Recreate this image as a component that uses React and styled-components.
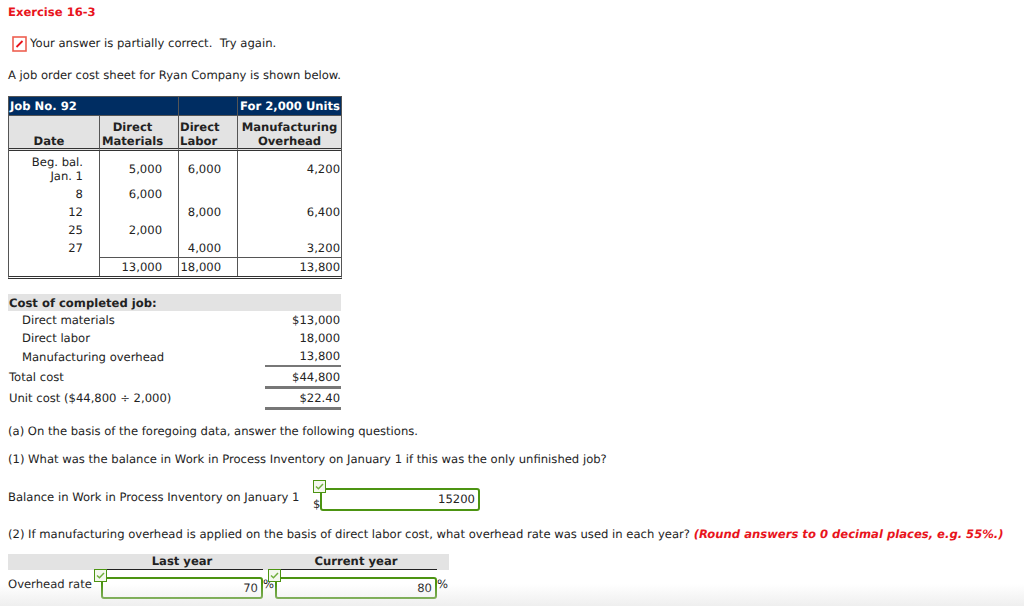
import React from 'react';
import styled, { createGlobalStyle } from 'styled-components';

const navy = '#002d62';
const gray = '#e3e3e3';
const rule = '#555';
const green = '#4c9412';

const GlobalStyle = createGlobalStyle`
    html, body {
        margin: 0;
        padding: 0;
        background: #fff;
    }
    body {
        font-family: 'DejaVu Sans', Verdana, sans-serif;
        font-size: 11.6px;
        color: #222;
        text-rendering: geometricPrecision;
    }
`;

const Page = styled.div`
    position: relative;
    width: 1024px;
    height: 606px;
    overflow: hidden;
    padding-left: 8px;
    box-sizing: border-box;
`;

const Heading = styled.div`
    color: #e8141c;
    font-weight: 700;
    line-height: 14px;
    padding-top: 5px;
`;

const Feedback = styled.div`
    display: flex;
    align-items: center;
    gap: 3px;
    margin: 17px 0 0 4px;
    height: 15px;
    line-height: 15px;
`;

const Text = styled.div`
    line-height: 14px;
    margin-top: ${props => props.$top}px;
    white-space: nowrap;
`;

const Hint = styled.em`
    color: #e8141c;
    font-weight: 700;
`;

const SheetTable = styled.table`
    border-collapse: separate;
    border-spacing: 0;
    table-layout: fixed;
    width: 334px;
    margin-top: ${props => props.$top}px;
    border: 1px solid ${rule};
    border-bottom: 3px double #333;
`;

const BannerCell = styled.th`
    background: ${navy};
    color: #fff;
    height: 18px;
    padding: 0 1px;
    text-align: ${props => props.$align || 'left'};
    border-right: ${props => props.$last ? 0 : `1px solid ${rule}`};
    border-bottom: 1px solid ${rule};
    line-height: 14px;
    white-space: nowrap;
`;

const HeadCell = styled.th`
    background: ${gray};
    height: 32px;
    padding: 0 ${props => props.$right || 1}px 0 1px;
    vertical-align: bottom;
    text-align: ${props => props.$align || 'center'};
    line-height: 14px;
    border-right: ${props => props.$last ? 0 : `1px solid ${rule}`};
    border-bottom: 3px double #333;
    color: #222;
`;

const NumCell = styled.td`
    padding: ${props => props.$nudge || 0}px ${props => props.$pad || 1}px 0 0;
    height: ${props => props.$height || 18}px;
    text-align: right;
    line-height: 14px;
    border-right: ${props => props.$last ? 0 : `1px solid ${rule}`};
    border-top: ${props => props.$total ? `1px solid ${rule}` : 0};
`;

const DateCell = styled(NumCell)`
    padding-right: 16px;
`;

const CostTable = styled.table`
    border-collapse: collapse;
    table-layout: fixed;
    width: 333px;
    margin-top: 15px;
`;

const CostHead = styled.th`
    background: ${gray};
    height: 17px;
    padding: 0 0 0 1px;
    text-align: left;
    line-height: 14px;
`;

const CostLabel = styled.td`
    height: ${props => props.$height || 18}px;
    padding: 0 0 0 ${props => props.$indent ? 14 : 1}px;
    line-height: 14px;
    white-space: nowrap;
`;

const CostValue = styled.td`
    height: ${props => props.$height || 18}px;
    padding: 0 1px 0 0;
    text-align: right;
    line-height: 14px;
    border-bottom: ${props => props.$rule || 0};
`;

const BalanceRow = styled.div`
    display: flex;
    margin-top: 15px;
    height: 37px;
`;

const BalanceLabel = styled.div`
    width: 305px;
    line-height: 14px;
    padding-top: 9px;
`;

const Dollar = styled.div`
    width: 7px;
    margin-top: 16px;
    line-height: 14px;
`;

const Field = styled.div`
    position: relative;
    box-sizing: border-box;
    width: ${props => props.$width}px;
    height: ${props => props.$height}px;
    margin-top: ${props => props.$top}px;
    border: 2px solid ${green};
    border-radius: 3px;
    background: #fff;
    text-align: right;
    padding-right: 3px;
    line-height: ${props => props.$height - 4}px;
`;

const Badge = styled.div`
    position: absolute;
    left: -9px;
    top: -10px;
    width: 13px;
    height: 13px;
    box-sizing: border-box;
    border: 1px solid ${green};
    background: #f4f8ee;
    display: flex;
    align-items: center;
    justify-content: center;
`;

const RateGrid = styled.div`
    display: grid;
    grid-template-columns: 93px 162px 12px 162px 12px;
    width: 441px;
    margin-top: 13px;
`;

const YearBand = styled.div`
    grid-column: 1 / -1;
    display: grid;
    grid-template-columns: subgrid;
    background: ${gray};
    height: 16px;
`;

const YearHead = styled.div`
    grid-column: ${props => props.$col};
    font-weight: 700;
    text-align: center;
    line-height: 15px;
    border-bottom: 1px solid #222;
`;

const RateLabel = styled.div`
    line-height: 14px;
    padding-top: 7px;
`;

const Percent = styled.div`
    line-height: 14px;
    padding-top: 7px;
`;

const BottomFade = styled.div`
    position: absolute;
    left: 0;
    right: 0;
    bottom: 0;
    height: 22px;
    background: linear-gradient(rgba(225, 225, 225, 0), rgba(225, 225, 225, 0.55));
    pointer-events: none;
`;

const PartialIcon = () => (
    <svg width="15" height="16" viewBox="0 0 15 16">
        <rect x="1" y="1" width="13" height="14" fill="#fff" stroke="#ee5f50" strokeWidth="1.6" />
        <path d="M4.5 11 L10.5 5" stroke="#e8141c" strokeWidth="1.8" />
    </svg>
);

const CheckIcon = () => (
    <svg width="9" height="7" viewBox="0 0 10 8">
        <path d="M1 4 L3.8 6.5 L9 1.2" fill="none" stroke="#6fae3c" strokeWidth="1.7" />
    </svg>
);

const Answer = ({ value, width, height, top }) => (
    <Field $width={width} $height={height} $top={top}>
        <Badge><CheckIcon /></Badge>
        {value}
    </Field>
);

const entries = [
    { date: ['Beg. bal.', 'Jan. 1'], materials: '5,000', labor: '6,000', overhead: '4,200', height: 32, nudge: 2 },
    { date: ['8'], materials: '6,000', height: 18 },
    { date: ['12'], labor: '8,000', overhead: '6,400', height: 18 },
    { date: ['25'], materials: '2,000', height: 18 },
    { date: ['27'], labor: '4,000', overhead: '3,200', height: 18 },
];

export default function App() {
    return (
        <Page>
            <GlobalStyle />
            <Heading>Exercise 16-3</Heading>
            <Feedback>
                <PartialIcon />
                <span>Your answer is partially correct.&nbsp; Try again.</span>
            </Feedback>
            <Text $top={17}>A job order cost sheet for Ryan Company is shown below.</Text>

            <SheetTable $top={14}>
                <colgroup>
                    <col width="91" />
                    <col width="79" />
                    <col width="59" />
                    <col width="103" />
                </colgroup>
                <thead>
                    <tr>
                        <BannerCell colSpan="2">Job No. 92</BannerCell>
                        <BannerCell></BannerCell>
                        <BannerCell $align="right" $last>For 2,000 Units</BannerCell>
                    </tr>
                    <tr>
                        <HeadCell $right={11}>Date</HeadCell>
                        <HeadCell $right={14}>Direct<br />Materials</HeadCell>
                        <HeadCell $align="left">Direct<br />Labor</HeadCell>
                        <HeadCell $last>Manufacturing<br />Overhead</HeadCell>
                    </tr>
                </thead>
                <tbody>
                    {entries.map(entry => (
                        <tr key={entry.date[0]}>
                            <DateCell $height={entry.height} $nudge={entry.nudge}>
                                {entry.date.map(line => <div key={line}>{line}</div>)}
                            </DateCell>
                            <NumCell $pad={16} $nudge={entry.nudge}>{entry.materials}</NumCell>
                            <NumCell $pad={16} $nudge={entry.nudge}>{entry.labor}</NumCell>
                            <NumCell $last $nudge={entry.nudge}>{entry.overhead}</NumCell>
                        </tr>
                    ))}
                    <tr>
                        <NumCell></NumCell>
                        <NumCell $total $pad={16}>13,000</NumCell>
                        <NumCell $total $pad={16}>18,000</NumCell>
                        <NumCell $total $last>13,800</NumCell>
                    </tr>
                </tbody>
            </SheetTable>

            <CostTable>
                <colgroup>
                    <col width="257" />
                    <col width="76" />
                </colgroup>
                <thead>
                    <tr><CostHead colSpan="2">Cost of completed job:</CostHead></tr>
                </thead>
                <tbody>
                    <tr><CostLabel $indent>Direct materials</CostLabel><CostValue>$13,000</CostValue></tr>
                    <tr><CostLabel $indent>Direct labor</CostLabel><CostValue>18,000</CostValue></tr>
                    <tr><CostLabel $indent>Manufacturing overhead</CostLabel><CostValue $rule={`2px solid #777`}>13,800</CostValue></tr>
                    <tr><CostLabel $height={19}>Total cost</CostLabel><CostValue $height={19} $rule={`3px solid #777`}>$44,800</CostValue></tr>
                    <tr><CostLabel $height={18}>Unit cost ($44,800 ÷ 2,000)</CostLabel><CostValue $height={18} $rule={`3px solid #777`}>$22.40</CostValue></tr>
                </tbody>
            </CostTable>

            <Text $top={14}>(a) On the basis of the foregoing data, answer the following questions.</Text>
            <Text $top={14}>(1) What was the balance in Work in Process Inventory on January 1 if this was the only unfinished job?</Text>

            <BalanceRow>
                <BalanceLabel>Balance in Work in Process Inventory on January 1</BalanceLabel>
                <Dollar>$</Dollar>
                <Answer value="15200" width={160} height={23} top={7} />
            </BalanceRow>

            <Text $top={9}>(2) If manufacturing overhead is applied on the basis of direct labor cost, what overhead rate was used in each year? <Hint>(Round answers to 0 decimal places, e.g. 55%.)</Hint></Text>

            <RateGrid>
                <YearBand>
                    <YearHead $col={2}>Last year</YearHead>
                    <YearHead $col={4}>Current year</YearHead>
                </YearBand>
                <RateLabel>Overhead rate</RateLabel>
                <Answer value="70" width={162} height={22} top={7} />
                <Percent>%</Percent>
                <Answer value="80" width={162} height={22} top={7} />
                <Percent>%</Percent>
            </RateGrid>
            <BottomFade />
        </Page>
    );
}
